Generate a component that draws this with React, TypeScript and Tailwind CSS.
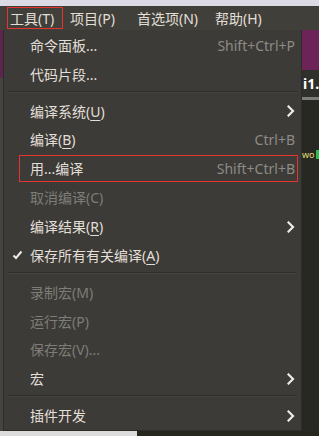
import React from 'react';

type Item =
  | { type: 'sep' }
  | {
      type: 'item';
      label: string;
      key?: string;
      shortcut?: string;
      disabled?: boolean;
      submenu?: boolean;
      checked?: boolean;
      boxed?: boolean;
    };

const items: Item[] = [
  { type: 'item', label: '命令面板...', shortcut: 'Shift+Ctrl+P' },
  { type: 'item', label: '代码片段...' },
  { type: 'sep' },
  { type: 'item', label: '编译系统', key: 'U', submenu: true },
  { type: 'item', label: '编译', key: 'B', shortcut: 'Ctrl+B' },
  { type: 'item', label: '用...编译', shortcut: 'Shift+Ctrl+B', boxed: true },
  { type: 'item', label: '取消编译(C)', disabled: true },
  { type: 'item', label: '编译结果', key: 'R', submenu: true },
  { type: 'item', label: '保存所有有关编译', key: 'A', checked: true },
  { type: 'sep' },
  { type: 'item', label: '录制宏(M)', disabled: true },
  { type: 'item', label: '运行宏(P)', disabled: true },
  { type: 'item', label: '保存宏(V)...', disabled: true },
  { type: 'item', label: '宏', submenu: true },
  { type: 'sep' },
  { type: 'item', label: '插件开发', submenu: true },
];

const Chevron = () => (
  <svg width="8" height="12" viewBox="0 0 8 12" className="shrink-0">
    <polyline
      points="1.5,1.5 6,6 1.5,10.5"
      fill="none"
      stroke="#ecebe6"
      strokeWidth="2.2"
      strokeLinecap="square"
    />
  </svg>
);

const Check = () => (
  <svg width="11" height="10" viewBox="0 0 11 10">
    <polyline points="1.5,5.5 4,8 9.5,1.5" fill="none" stroke="#ecebe6" strokeWidth="2" />
  </svg>
);

export default function App() {
  return (
    <div
      className="relative w-[319px] h-[436px] overflow-hidden bg-[#272822] text-[14px]"
      style={{ fontFamily: '"Noto Sans", "Noto Sans CJK SC", sans-serif' }}
    >
      {/* window top */}
      <div className="h-[6px] bg-[#dcdbe5]" />

      {/* menu bar */}
      <div className="h-[24px] bg-[#403f3a] flex items-center text-[#e2dfd8] text-[14px] whitespace-nowrap">
        <div className="ml-[7px] w-[56px] h-[22px] pl-[2px] flex items-center border border-[#e5332f]">工具(T)</div>
        <div className="w-[67px] pl-[7px]">项目(P)</div>
        <div className="w-[78px] pl-[7px]">首选项(N)</div>
        <div className="pl-[7px]">帮助(H)</div>
      </div>

      <div className="flex h-[401px]">
        {/* left edge */}
        <div className="w-[3px] shrink-0 flex flex-col">
          <div className="h-[48px] bg-[#5e2450]" />
          <div className="flex-1 bg-[#45443f]" />
        </div>

        {/* dropdown */}
        <div className="w-[299px] shrink-0 bg-[#3c3b37] border border-[#2d2c29] border-t-0 flex flex-col pt-[1px]">
          {items.map((it, i) =>
            it.type === 'sep' ? (
              <div key={i} className="h-[8px] pt-[2px] px-[4px]">
                <div className="h-[1px] bg-[#2f2e2b]" />
                <div className="h-[1px] bg-[#44433f]" />
              </div>
            ) : (
              <div key={i} className="relative h-[29px] flex items-center pr-[6px]">
                <div className="w-[26px] flex justify-center pl-[1px] shrink-0">{it.checked && <Check />}</div>
                <div className={`flex-1 whitespace-nowrap ${it.disabled ? 'text-[#7e7d78]' : 'text-[#e2dfd8]'}`}>
                  {it.label}
                  {it.key && (
                    <>
                      (<span className="underline underline-offset-[3px]">{it.key}</span>)
                    </>
                  )}
                </div>
                {it.shortcut && <div className="text-[#8d8b86] whitespace-nowrap">{it.shortcut}</div>}
                {it.submenu && <Chevron />}
                {it.boxed && (
                  <div className="absolute left-[15px] right-[3px] top-[1px] bottom-[1px] border border-[#e5332f]" />
                )}
              </div>
            )
          )}
        </div>

        {/* right: editor behind */}
        <div className="flex-1 min-w-0 overflow-hidden flex flex-col">
          <div className="h-[40px] bg-[#6b2358]" />
          <div className="h-[27px] bg-[#2f2f2b] flex items-center pl-[1px] text-white font-bold text-[14px] whitespace-nowrap">
            i1.
          </div>
          <div className="h-[3px] bg-[#7d7c78]" />
          <div className="flex-1 bg-[#272822] pt-[50px] flex items-start gap-[1px] text-[9px] leading-none">
            <span className="text-[#e6db74]">wo</span>
            <span className="w-[3px] h-[9px] bg-[#2fbf4a]" />
          </div>
        </div>
      </div>

      {/* bottom shadow strip */}
      <div className="flex h-[5px]">
        <div className="w-[137px] bg-[#dcdcdc]" />
        <div className="flex-1 bg-[#26261f]" />
      </div>
    </div>
  );
}
